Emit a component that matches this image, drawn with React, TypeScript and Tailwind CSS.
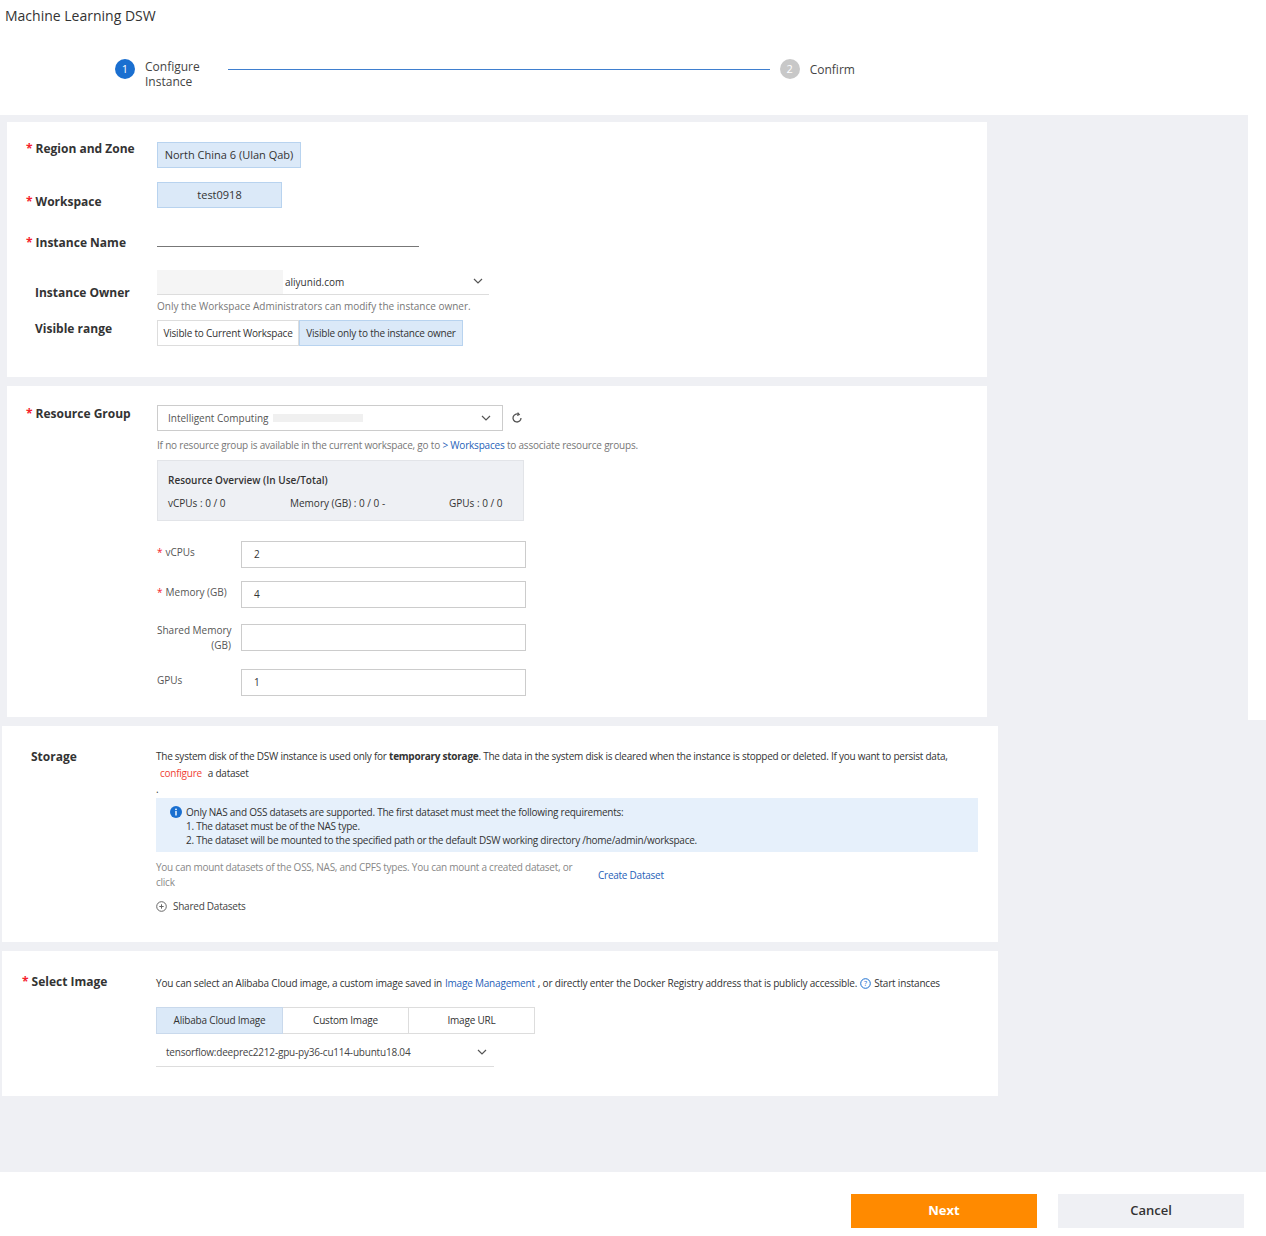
import React from "react";

const Star = () => <span className="text-[#f5222d] mr-[3px]">*</span>;
const Chevron = ({ c = "" }: { c?: string }) => (
  <svg width="12" height="12" viewBox="0 0 12 12" className={c}><path d="M2 4l4 4 4-4" fill="none" stroke="#555" strokeWidth="1.2" /></svg>
);

export default function App() {
  return (
    <div className="w-[1266px] bg-white text-[#333] text-[11px]" style={{ fontFamily: '"Open Sans","Noto Sans",sans-serif' }}>
      {/* header */}
      <div className="h-[115px] w-[1248px] relative">
        <div className="pt-[5px] pl-[5px] text-[14px] text-[#333]">Machine Learning DSW</div>
        <div className="flex items-start pl-[115px] pt-[33px]">
          <div className="w-[20px] h-[20px] rounded-full bg-[#1a6fd0] text-white text-[11px] flex items-center justify-center mt-[0px]">1</div>
          <div className="ml-[10px] text-[12px] leading-[15px] text-[#444]">Configure<br />Instance</div>
          <div className="ml-[28px] mt-[10px] w-[542px] h-px bg-[#3f7fcf]" />
          <div className="ml-[10px] w-[20px] h-[20px] rounded-full bg-[#c8c8c8] text-white text-[11px] flex items-center justify-center">2</div>
          <div className="ml-[10px] mt-[2px] text-[12px] text-[#444]">Confirm</div>
        </div>
      </div>

      {/* upper gray */}
      <div className="w-[1248px] bg-[#eff0f4] pt-[7px] pl-[7px] pb-[3px]">
        <div className="w-[980px] h-[255px] bg-white pl-[19px] pt-[18px] relative">
          <div className="flex items-start">
            <div className="w-[131px] font-bold text-[12px]"><Star />Region and Zone</div>
            <div className="w-[144px] h-[26px] mt-[2px] bg-[#dbe9f8] border border-[#b8d3ef] flex items-center justify-center">North China 6 (Ulan Qab)</div>
          </div>
          <div className="flex items-start mt-[14px]">
            <div className="w-[131px] font-bold text-[12px] mt-[11px]"><Star />Workspace</div>
            <div className="w-[125px] h-[26px] bg-[#dbe9f8] border border-[#b8d3ef] flex items-center justify-center">test0918</div>
          </div>
          <div className="flex items-start mt-[23px]">
            <div className="w-[131px] font-bold text-[12px]"><Star />Instance Name</div>
            <div className="w-[262px] h-[13px] border-b border-[#777]" />
          </div>
          <div className="flex items-start mt-[13px]">
            <div className="w-[131px] font-bold text-[12px] mt-[19px] pl-[9px]">Instance Owner</div>
            <div>
              <div className="w-[332px] h-[30px] border-b border-[#ddd] flex items-end pb-[4px]">
                <div className="w-[126px] h-[24px] bg-[#f5f5f5] mb-[-4px]" />
                <span className="ml-[2px] text-[10px]">aliyunid.com</span>
                <Chevron c="ml-auto mr-[5px] mb-[3px]" />
              </div>
              <div className="mt-[4px] text-[10px] text-[#777]">Only the Workspace Administrators can modify the instance owner.</div>
            </div>
          </div>
          <div className="flex items-start mt-[6px]">
            <div className="w-[131px] font-bold text-[12px] pl-[9px]">Visible range</div>
            <div className="flex h-[26px] text-[10px] tracking-[-0.2px]">
              <div className="w-[142px] border border-[#ddd] flex items-center justify-center">Visible to Current Workspace</div>
              <div className="w-[164px] bg-[#dbe9f8] border border-[#b8d3ef] flex items-center justify-center">Visible only to the instance owner</div>
            </div>
          </div>
        </div>

        <div className="w-[980px] h-[331px] bg-white mt-[9px] pl-[19px] pt-[19px]">
          <div className="flex items-start">
            <div className="w-[131px] font-bold text-[12px]"><Star />Resource Group</div>
            <div>
              <div className="flex items-center">
                <div className="w-[346px] h-[26px] border border-[#ccc] flex items-center px-[10px] text-[#555] text-[10px]">
                  Intelligent Computing
                  <span className="ml-[4px] w-[90px] h-[8px] bg-[#f0f0f0]" />
                  <Chevron c="ml-auto" />
                </div>
                <svg width="14" height="14" viewBox="0 0 14 14" className="ml-[7px]"><path d="M11 7a4 4 0 1 1-2.2-3.6" fill="none" stroke="#555" strokeWidth="1.3" /><path d="M7.6 1.6l1.6 1.9-2 1" fill="none" stroke="#555" strokeWidth="1.3" /></svg>
              </div>
              <div className="mt-[7px] text-[10px] text-[#777] tracking-[-0.2px]">If no resource group is available in the current workspace, go to <span className="text-[#1f5fb8]">&gt; Workspaces</span> to associate resource groups.</div>
              <div className="mt-[7px] w-[367px] h-[61px] bg-[#eef0f4] border border-[#e2e4e8] px-[10px] pt-[12px] text-[10px]">
                <div className="font-semibold">Resource Overview (In Use/Total)</div>
                <div className="flex mt-[8px]">
                  <span className="w-[122px]">vCPUs : 0 / 0</span>
                  <span className="w-[159px]">Memory (GB) : 0 / 0 -</span>
                  <span>GPUs : 0 / 0</span>
                </div>
              </div>
              {[
                ["vCPUs", "2", true, 20],
                ["Memory (GB)", "4", true, 13],
                ["Shared Memory (GB)", "", false, 16],
                ["GPUs", "1", false, 16],
              ].map(([l, v, s, m], i) => (
                <div key={i} className="flex items-start" style={{ marginTop: m as number }}>
                  <div className={`w-[84px] text-[10px] text-[#555] whitespace-nowrap ${i === 2 ? "text-right pr-[10px] leading-[15px] mt-[-1px]" : "mt-[4px]"}`}>
                    {s ? <Star /> : null}{i === 2 ? <>Shared Memory<br />(GB)</> : l}
                  </div>
                  <div className="w-[285px] h-[27px] border border-[#ccc] flex items-center px-[12px] text-[#333] text-[10px]">{v}</div>
                </div>
              ))}
            </div>
          </div>
        </div>
      </div>

      {/* lower gray */}
      <div className="bg-[#eff0f4] pt-[6px] pl-[2px] h-[452px]">
        <div className="w-[996px] h-[216px] bg-white flex pt-[22px]">
          <div className="w-[154px] pl-[29px] font-bold text-[12px]">Storage</div>
          <div className="w-[822px] text-[10px] tracking-[-0.25px]">
            <div className="leading-[17px]">The system disk of the DSW instance is used only for <b>temporary storage</b>. The data in the system disk is cleared when the instance is stopped or deleted. If you want to persist data,<br /><span className="text-[#f04134] ml-[4px] mr-[6px]">configure</span>a dataset</div>
            <div className="leading-[10px] mt-[2px]">.</div>
            <div className="mt-[4px] h-[54px] bg-[#e6f0fb] px-[14px] pt-[7px] leading-[14px]">
              <div className="flex items-center">
                <svg width="12" height="12" viewBox="0 0 12 12" className="mr-[4px]"><circle cx="6" cy="6" r="6" fill="#1a6fd0" /><rect x="5.3" y="5" width="1.4" height="4.5" fill="white" /><circle cx="6" cy="3.3" r="0.9" fill="white" /></svg>
                Only NAS and OSS datasets are supported. The first dataset must meet the following requirements:
              </div>
              <div className="pl-[16px]">1. The dataset must be of the NAS type.</div>
              <div className="pl-[16px]">2. The dataset will be mounted to the specified path or the default DSW working directory /home/admin/workspace.</div>
            </div>
            <div className="flex mt-[8px] text-[#888] leading-[15px]">
              <div className="w-[442px]">You can mount datasets of the OSS, NAS, and CPFS types. You can mount a created dataset, or<br />click</div>
              <div className="mt-[8px] text-[#1f5fb8]">Create Dataset</div>
            </div>
            <div className="flex items-center mt-[9px] text-[#444]">
              <svg width="11" height="11" viewBox="0 0 11 11" className="mr-[6px]"><circle cx="5.5" cy="5.5" r="4.8" fill="none" stroke="#666" /><path d="M3.3 5.5h4.4M5.5 3.3v4.4" stroke="#666" /></svg>
              Shared Datasets
            </div>
          </div>
        </div>

        <div className="w-[996px] h-[145px] bg-white mt-[9px] flex pt-[22px]">
          <div className="w-[154px] pl-[20px] font-bold text-[12px]"><Star />Select Image</div>
          <div className="text-[10px] tracking-[-0.2px]">
            <div className="mt-[3px] flex items-center">You can select an Alibaba Cloud image, a custom image saved in <span className="text-[#1f5fb8] mx-[3px]">Image Management</span>, or directly enter the Docker Registry address that is publicly accessible.
              <svg width="11" height="11" viewBox="0 0 11 11" className="mx-[3px]"><circle cx="5.5" cy="5.5" r="4.8" fill="none" stroke="#1a6fd0" /><text x="5.5" y="8" fontSize="7" textAnchor="middle" fill="#1a6fd0">?</text></svg>
              Start instances
            </div>
            <div className="flex mt-[16px] h-[27px]">
              <div className="w-[127px] bg-[#dbe9f8] border border-[#c9d9ec] flex items-center justify-center">Alibaba Cloud Image</div>
              <div className="w-[126px] border border-[#ddd] border-l-0 flex items-center justify-center">Custom Image</div>
              <div className="w-[126px] border border-[#ddd] border-l-0 flex items-center justify-center">Image URL</div>
            </div>
            <div className="mt-[4px] w-[338px] h-[29px] border-b border-[#ddd] flex items-center pl-[10px] text-[#444]">
              tensorflow:deeprec2212-gpu-py36-cu114-ubuntu18.04
              <Chevron c="ml-auto mr-[6px]" />
            </div>
          </div>
        </div>
      </div>

      {/* footer */}
      <div className="h-[64px] flex items-start justify-end pt-[22px] pr-[22px] gap-[21px]">
        <button className="w-[186px] h-[34px] bg-[#ff8a00] text-white font-bold text-[13px]">Next</button>
        <button className="w-[186px] h-[34px] bg-[#eff0f4] text-[#333] font-semibold text-[13px]">Cancel</button>
      </div>
    </div>
  );
}
